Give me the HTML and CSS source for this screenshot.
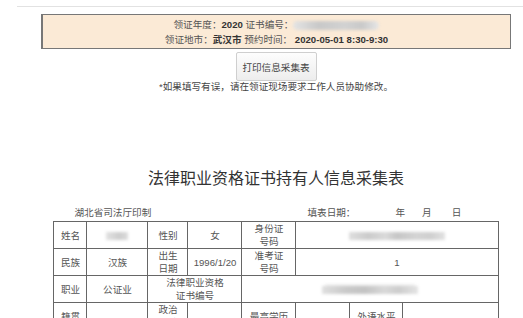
FILE: index.html
```html
<!DOCTYPE html>
<html lang="zh-CN">
<head>
    <meta charset="UTF-8">
    <meta name="viewport" content="width=device-width, initial-scale=1.0">
    <title>信息采集表</title>
    <link rel="stylesheet" href="styles.css">
</head>
<body>
    <div class="page">
        <div class="wrap">

            <div class="notice">
                <p>领证年度：<b>2020</b> 证书编号：<span class="blur blur-cert"></span></p>
                <p>领证地市：<b>武汉市</b> 预约时间：&nbsp;<b>2020-05-01 8:30-9:30</b></p>
            </div>

            <div class="actions">
                <button class="print-btn">打印信息采集表</button>
                <p class="tip">*如果填写有误，请在领证现场要求工作人员协助修改。</p>
            </div>

            <h1 class="title">法律职业资格证书持有人信息采集表</h1>

            <div class="form-head">
                <span class="printer">湖北省司法厅印制</span>
                <span class="fill-date">填表日期：<span class="d-year">年</span><span class="d-month">月</span><span class="d-day">日</span></span>
            </div>

            <table class="info">
                <colgroup>
                    <col style="width:33px"><col style="width:61px"><col style="width:40px"><col style="width:54px">
                    <col style="width:54px"><col style="width:54px"><col style="width:53px"><col style="width:95px">
                </colgroup>
                <tr>
                    <td>姓名</td>
                    <td><span class="blur blur-name"></span></td>
                    <td>性别</td>
                    <td>女</td>
                    <td>身份证<br>号码</td>
                    <td colspan="3"><span class="blur blur-id"></span></td>
                </tr>
                <tr>
                    <td>民族</td>
                    <td>汉族</td>
                    <td>出生<br>日期</td>
                    <td>1996/1/20</td>
                    <td>准考证<br>号码</td>
                    <td colspan="3">1</td>
                </tr>
                <tr>
                    <td>职业</td>
                    <td>公证业</td>
                    <td colspan="2">法律职业资格<br>证书编号</td>
                    <td colspan="4"><span class="blur blur-no"></span></td>
                </tr>
                <tr>
                    <td>籍贯</td>
                    <td></td>
                    <td>政治<br>面貌</td>
                    <td></td>
                    <td>最高学历</td>
                    <td></td>
                    <td>外语水平</td>
                    <td></td>
                </tr>
                <tr>
                    <td>地址</td>
                    <td colspan="7"></td>
                </tr>
            </table>

        </div>
    </div>
</body>
</html>
```

FILE: styles.css
```css
html, body {
    overflow: hidden;
}

body {
    margin: 0;
    font-family: "Liberation Sans", "Noto Sans CJK SC", sans-serif;
    font-size: 9.6px;
    color: #555;
    background-color: #fff;
}

.page {
    padding: 6px 0 0 17px;
}

.wrap {
    border-top: 1px solid #e2e2e2;
    padding: 7px 12px 0 24px;
}

.notice {
    background-color: #fbead6;
    border: 1px solid #777;
    border-left-width: 2px;
    text-align: center;
    padding: 2px 0 1px;
    line-height: 15px;
}

.notice p {
    margin: 0;
}

.notice b {
    color: #333;
}

.actions {
    text-align: center;
    margin-top: 3px;
}

.print-btn {
    font-family: inherit;
    font-size: 9.6px;
    color: #444;
    width: 81px;
    height: 29px;
    padding: 0;
    background: linear-gradient(#fdfdfd, #ededed);
    border: 1px solid #cfcfcf;
    border-radius: 2px;
}

.tip {
    margin: 0;
    line-height: 12px;
    color: #444;
}

.title {
    margin: 76px 0 0;
    font-size: 16px;
    font-weight: normal;
    line-height: 20px;
    text-align: center;
    color: #333;
}

.form-head {
    width: 443px;
    margin: 18px auto 0;
    display: flex;
    line-height: 12px;
}

.printer {
    padding-left: 20px;
    flex: 1;
}

.fill-date {
    width: 190px;
}

.d-year {
    margin-left: 40px;
}

.d-month {
    margin-left: 17px;
}

.d-day {
    margin-left: 20px;
}

.info {
    width: 443px;
    margin: 2px auto 0;
    border-collapse: collapse;
    table-layout: fixed;
    border: 1px solid #666;
}

.info td {
    border: 1px solid #666;
    height: 26px;
    padding: 0;
    line-height: 13px;
    text-align: center;
    vertical-align: middle;
}

.blur {
    display: inline-block;
    vertical-align: middle;
    filter: blur(1.5px);
}

.blur-cert {
    width: 86px;
    height: 9px;
    border-radius: 5px;
    background: linear-gradient(90deg, #e4e4e4, #c8c8c8 30%, #d2d2d2 60%, #c9c9c9 80%, #e6e6e6);
}

.blur-name {
    width: 22px;
    height: 8px;
    background: linear-gradient(90deg, #e2e2e2, #cdcdcd 60%, #dcdcdc);
}

.blur-id {
    width: 96px;
    height: 8px;
    background: linear-gradient(90deg, #dedede, #cbcbcb 20%, #dadada 38%, #c6c6c6 50%, #d4d4d4 70%, #cfcfcf 85%, #e2e2e2);
}

.blur-no {
    width: 96px;
    height: 8px;
    background: linear-gradient(90deg, #dfdfdf, #c9c9c9 25%, #c3c3c3 45%, #d8d8d8 65%, #cdcdcd 80%, #e4e4e4);
    box-shadow: 0 -5px 0 -3px #efefef;
}
```
